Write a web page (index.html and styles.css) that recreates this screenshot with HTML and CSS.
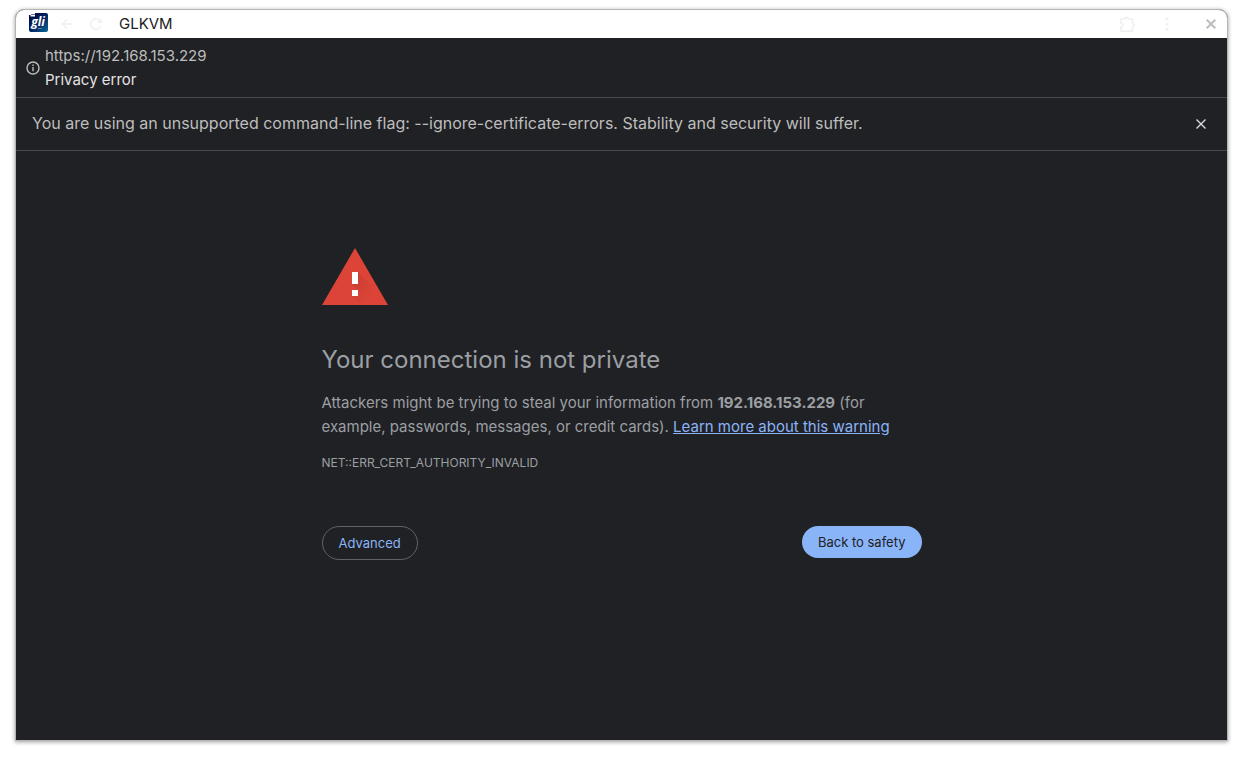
FILE: index.html
```html
<!DOCTYPE html>
<html lang="en">
<head>
  <meta charset="utf-8">
  <title>Privacy error</title>
  <link rel="stylesheet" href="styles.css">
</head>
<body>
  <div class="window">
    <header class="titlebar">
      <svg class="app-icon" width="19" height="19" viewBox="0 0 19 19" aria-hidden="true">
        <defs>
          <linearGradient id="logo" x1="0" y1="0" x2="1" y2="1">
            <stop offset="0" stop-color="#05053f"/>
            <stop offset="0.5" stop-color="#03205c"/>
            <stop offset="1" stop-color="#066a9c"/>
          </linearGradient>
        </defs>
        <rect width="19" height="19" rx="2" fill="url(#logo)"/>
        <path d="M0 0h6v3.500H1.500V2H0z" fill="#fff"/>
        <path d="M2 1.500h4" stroke="#6d70a5" stroke-width="1"/>
        <text class="logo-text" x="9" y="13" text-anchor="middle">gli</text>
        <path d="M9 15.500h4" stroke="#4c86b4" stroke-width="1"/>
      </svg>
      <button class="tool back" aria-label="Back">
        <svg width="12" height="12" viewBox="0 0 12 12"><path d="M11.500 6H1.500M6.500 1L1.500 6l5 5" fill="none" stroke="currentColor" stroke-width="1.500"/></svg>
      </button>
      <button class="tool reload" aria-label="Reload">
        <svg width="14" height="14" viewBox="0 0 14 14"><path d="M11.800 9.200A5.300 5.300 0 1 1 10.600 3.200L12 4.600" fill="none" stroke="currentColor" stroke-width="1.500"/><path d="M12.800 1v5H7.800z" fill="currentColor"/></svg>
      </button>
      <span class="app-name">GLKVM</span>
      <button class="tool extensions" aria-label="Extensions">
        <svg width="17" height="17" viewBox="0 0 17 17"><path d="M1.800 3H6a1.600 1.600 0 0 1 3.200 0H13.500V7.500a1.500 1.500 0 0 1 0 3.200V15.200H1.800V11.300a2 2 0 0 0 0-4.200z" fill="none" stroke="currentColor" stroke-width="1.600" stroke-linejoin="round"/></svg>
      </button>
      <button class="tool menu" aria-label="Menu">
        <svg width="4" height="14" viewBox="0 0 4 14" fill="currentColor"><circle cx="2" cy="2" r="1.600"/><circle cx="2" cy="7" r="1.600"/><circle cx="2" cy="12" r="1.600"/></svg>
      </button>
      <button class="tool close" aria-label="Close window">
        <svg width="10" height="10" viewBox="0 0 10 10"><path d="M.700.700l8.600 8.600M9.300.700L.700 9.300" stroke="currentColor" stroke-width="2"/></svg>
      </button>
    </header>

    <div class="location">
      <svg class="info" width="14" height="14" viewBox="0 0 14 14" aria-hidden="true"><circle cx="7" cy="7" r="6" fill="none" stroke="currentColor" stroke-width="1.400"/><path d="M7 6v4.300M7 3.600V5" stroke="currentColor" stroke-width="1.400"/></svg>
      <div>
        <div class="url">https://192.168.153.229</div>
        <div class="page-title">Privacy error</div>
      </div>
    </div>

    <div class="infobar">
      <span>You are using an unsupported command-line flag: --ignore-certificate-errors. Stability and security will suffer.</span>
      <button class="tool dismiss" aria-label="Dismiss">
        <svg width="10" height="10" viewBox="0 0 10 10"><path d="M.500.500l9 9M9.500.500l-9 9" stroke="currentColor" stroke-width="1.400"/></svg>
      </button>
    </div>

    <main class="interstitial">
      <svg class="warning" width="66" height="57" viewBox="0 0 66 57" aria-hidden="true">
        <defs>
          <linearGradient id="shadow" x1="0" y1="0" x2="1" y2="1">
            <stop offset="0" stop-color="#9c2f26" stop-opacity="0.350"/>
            <stop offset="0.800" stop-color="#9c2f26" stop-opacity="0"/>
          </linearGradient>
        </defs>
        <path d="M33 0l33 57H0z" fill="#db4437"/>
        <path d="M36 24l14 14v19H39l-9-9 6-6-6-6z" fill="url(#shadow)"/>
        <path d="M30 24h6v12h-6zM30 42h6v6h-6z" fill="#fff"/>
      </svg>
      <h1>Your connection is not private</h1>
      <p>Attackers might be trying to steal your information from <strong>192.168.153.229</strong> (for example, passwords, messages, or credit cards). <a href="#">Learn more about this warning</a></p>
      <div class="error-code">NET::ERR_CERT_AUTHORITY_INVALID</div>
      <div class="buttons">
        <button class="secondary">Advanced</button>
        <button class="primary">Back to safety</button>
      </div>
    </main>
  </div>
</body>
</html>
```
FILE: styles.css
```css
* { box-sizing: border-box; }
body { margin: 0; padding: 9px 15px 31px; min-height: 100vh; display: flex; background: #fff; font-family: Inter, sans-serif; }
button { font-family: inherit; cursor: pointer; }
svg { display: block; flex: none; }

.window { flex: 1; display: flex; flex-direction: column; overflow: hidden; border: 1px solid #b4b4b4; border-radius: 9px 9px 0 0; background: #202124; box-shadow: 0 1px 4px rgba(0, 0, 0, 0.4); }

.titlebar { display: flex; align-items: center; height: 28px; padding: 0 11px 0 13px; background: #fff; }
.app-icon { margin-bottom: 3px; }
.logo-text { font: italic bold 12px "Open Sans", sans-serif; fill: #fff; }
.tool { display: flex; padding: 0; border: 0; background: none; color: #f0f0f0; }
.back { margin-left: 13px; }
.reload { margin-left: 16px; }
.app-name { margin-left: 16px; padding-bottom: 2px; font-size: 15px; color: #202124; }
.extensions { margin-left: auto; }
.menu { margin-left: 29px; }
.close { margin-left: 37px; color: #bdbdbd; }

.location { display: flex; align-items: center; gap: 5px; padding: 6px 10px 5px; border-bottom: 1px solid #47484b; font-size: 15px; line-height: 24px; }
.info, .url { color: #bdbdbd; }
.url { font-feature-settings: "calt" 0; }
.page-title { color: #e3e3e3; }

.infobar { display: flex; align-items: center; justify-content: space-between; height: 53px; padding: 0 21px 0 16px; border-bottom: 1px solid #47484b; font-size: 16px; color: #bdbdbd; }
.infobar span { padding-bottom: 2px; }
.dismiss { color: #dadce0; }

.interstitial { width: 100%; max-width: 600px; margin: 0 auto; padding-top: 97px; color: #9b9fa3; font-size: 15px; line-height: 24px; }
h1 { margin: 40px 0 17px; font-size: 24px; font-weight: 400; line-height: 29px; }
p { margin: 0; }
a { color: #8ab4f8; }
.error-code { margin-top: 12px; font-size: 12px; }
.buttons { display: flex; justify-content: space-between; align-items: flex-start; margin-top: 51px; }
.buttons button { padding: 0 16px; border-radius: 20px; font-size: 13px; }
.secondary { height: 34px; border: 1px solid #5f6368; background: #202124; color: #8ab4f8; }
.primary { height: 32px; border: 0; background: #8ab4f8; color: #202124; }
```
